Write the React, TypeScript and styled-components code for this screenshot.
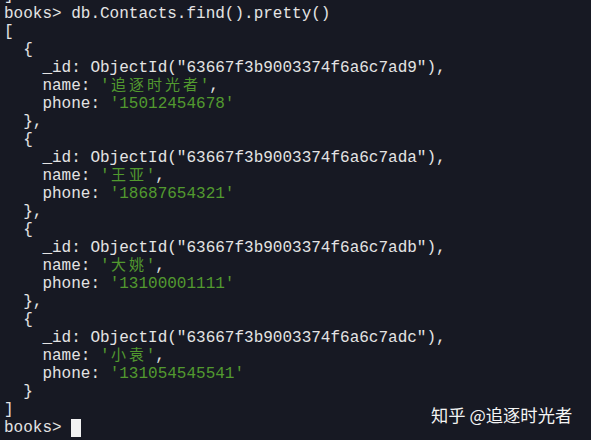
import React from "react";
import styled, { createGlobalStyle } from "styled-components";

const Global = createGlobalStyle`
  html, body { margin: 0; padding: 0; background: #171923; }
  body { width: 591px; height: 440px; overflow: hidden; }
`;

const Screen = styled.div`
  position: relative;
  width: 591px;
  height: 440px;
  overflow: hidden;
  background: #171923;
`;

const Output = styled.div`
  margin-top: -13px;
  padding-left: 4px;
  font-family: "Liberation Mono", "Noto Sans CJK SC", monospace;
  font-size: 16px;
  line-height: 18px;
  color: #e4e4e4;
  white-space: pre;
`;

const Line = styled.div`
  height: 18px;
  display: flex;
  align-items: center;
`;

const Seg = styled.span<{ $kind: "plain" | "str" }>`
  color: ${(p) => (p.$kind === "str" ? "#52992f" : "#e4e4e4")};
`;

const Wide = styled.span`
  display: inline-block;
  width: 2ch;
  text-align: center;
  font-size: 15px;
`;

const Cursor = styled.span`
  display: inline-block;
  width: 10px;
  height: 18px;
  background: #f2f2f2;
`;

const Watermark = styled.div`
  position: absolute;
  left: 431px;
  top: 403px;
  font-family: "Noto Sans CJK SC", "Noto Sans", sans-serif;
  font-size: 17.3px;
  line-height: 24px;
  color: #f4f4f4;
  white-space: pre;
`;

type S = { t: string; k?: "plain" | "str" };

const isCJK = (c: string) => /[\u3000-\u9fff\uff00-\uffef]/.test(c);

function renderText(text: string) {
  const out: React.ReactNode[] = [];
  let buf = "";
  [...text].forEach((c, i) => {
    if (isCJK(c)) {
      if (buf) out.push(buf);
      buf = "";
      out.push(<Wide key={i}>{c}</Wide>);
    } else buf += c;
  });
  if (buf) out.push(buf);
  return out;
}

const contacts = [
  { id: "63667f3b9003374f6a6c7ad9", name: "追逐时光者", phone: "15012454678" },
  { id: "63667f3b9003374f6a6c7ada", name: "王亚", phone: "18687654321" },
  { id: "63667f3b9003374f6a6c7adb", name: "大姚", phone: "13100001111" },
  { id: "63667f3b9003374f6a6c7adc", name: "小袁", phone: "131054545541" },
];

const lines: S[][] = [
  [{ t: "]" }],
  [{ t: "books> db.Contacts.find().pretty()" }],
  [{ t: "[" }],
];
contacts.forEach((c, i) => {
  lines.push([{ t: "  {" }]);
  lines.push([{ t: `    _id: ObjectId("${c.id}"),` }]);
  lines.push([{ t: "    name: " }, { t: `'${c.name}'`, k: "str" }, { t: "," }]);
  lines.push([{ t: "    phone: " }, { t: `'${c.phone}'`, k: "str" }]);
  lines.push([{ t: i === contacts.length - 1 ? "  }" : "  }," }]);
});
lines.push([{ t: "]" }]);

export default function App() {
  return (
    <Screen>
      <Global />
      <Output>
        {lines.map((segs, i) => (
          <Line key={i}>
            {segs.map((s, j) => (
              <Seg key={j} $kind={s.k ?? "plain"}>
                {renderText(s.t)}
              </Seg>
            ))}
          </Line>
        ))}
        <Line>
          <Seg $kind="plain">books&gt; </Seg>
          <Cursor />
        </Line>
      </Output>
      <Watermark>知乎 @追逐时光者</Watermark>
    </Screen>
  );
}
